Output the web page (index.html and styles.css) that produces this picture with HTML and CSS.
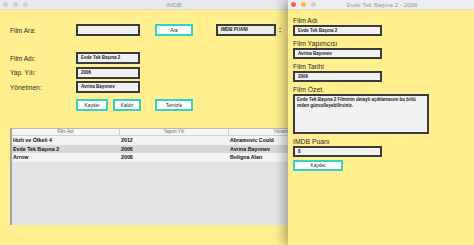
FILE: index.html
```html
<!DOCTYPE html>
<html lang="tr">
	<head>
		<meta charset="UTF-8" />
		<meta name="viewport" content="width=device-width, initial-scale=1.0" />
		<title>IMDB</title>
		<link rel="stylesheet" href="styles.css">
	</head>
	<body>
		<div class="desk">
			<!-- ana pencere -->
			<section class="win main-win">
				<header class="titlebar">
					<span class="lights"><i></i><i></i><i></i></span>
					<span class="title">IMDB</span>
				</header>
				<div class="main-body">
					<div class="row search-row">
						<span class="lbl">Film Ara:</span>
						<div class="field"></div>
						<button class="btn btn-ara">Ara</button>
						<div class="select">
							<span class="select-box">IMDB PUANI</span>
							<span class="spin">&#9652;<br>&#9662;</span>
						</div>
					</div>

					<div class="form">
						<div class="row">
							<span class="lbl">Film Adı:</span>
							<div class="field">Evde Tek Başına 2</div>
						</div>
						<div class="row">
							<span class="lbl">Yap. Yılı:</span>
							<div class="field">2006</div>
						</div>
						<div class="row">
							<span class="lbl">Yönetmen:</span>
							<div class="field">Avrina Bayonev</div>
						</div>
					</div>

					<div class="row btn-row">
						<span class="lbl"></span>
						<button class="btn btn-kaydet">Kaydet</button>
						<button class="btn btn-kaldir">Kaldır</button>
						<button class="btn btn-temizle">Temizle</button>
					</div>

					<div class="table">
						<div class="thead">
							<span>Film Adı</span>
							<span>Yapım Yılı</span>
							<span>Yönetmen</span>
						</div>
						<div class="tr">
							<span>Hızlı ve Öfkeli 4</span>
							<span>2012</span>
							<span>Abramovic Could</span>
						</div>
						<div class="tr selected">
							<span>Evde Tek Başına 2</span>
							<span>2006</span>
							<span>Avrina Bayonev</span>
						</div>
						<div class="tr">
							<span>Arrow</span>
							<span>2008</span>
							<span>Boligna Alan</span>
						</div>
					</div>
				</div>
			</section>

			<!-- detay penceresi -->
			<section class="win detail-win">
				<header class="titlebar">
					<span class="lights active"><i></i><i></i><i></i></span>
					<span class="title">Evde Tek Başına 2 - 2006</span>
				</header>
				<div class="detail-body">
					<span class="dlbl">Film Adı</span>
					<div class="dfield">Evde Tek Başına 2</div>
					<span class="dlbl">Film Yapımcısı</span>
					<div class="dfield">Avrina Bayonev</div>
					<span class="dlbl">Film Tarihi</span>
					<div class="dfield">2006</div>
					<span class="dlbl">Film Özet.</span>
					<div class="darea">Evde Tek Başına 2 Filminin detaylı açıklamasını bu bölü<br>mden güncelleyebilirsiniz.</div>
					<span class="dlbl">IMDB Puanı</span>
					<div class="dfield">8</div>
					<button class="btn btn-dkaydet">Kaydet</button>
				</div>
			</section>
		</div>
	</body>
</html>
```

FILE: styles.css
```css
* {
	padding: 0;
	margin: 0;
	border: 0;
	box-sizing: border-box;
}

body {
	font-family: "Liberation Sans", Arial, sans-serif;
	color: #222;
	background: #ffef8e;
}

.desk {
	position: relative;
	width: 474px;
	height: 245px;
	overflow: hidden;
}

.win {
	position: absolute;
	top: 0;
	height: 245px;
	background: #ffef8e;
}

.main-win {
	left: 0;
	width: 348px;
}

.detail-win {
	left: 288px;
	width: 188px;
	box-shadow: -5px 0 9px rgba(0, 0, 0, 0.28);
}

/* pencere başlığı */
.titlebar {
	position: relative;
	display: flex;
	align-items: center;
	height: 10px;
	background: #e9e9e9;
	border-bottom: 1px solid #dcdcdc;
}

.detail-win .titlebar {
	background: #ededed;
}

.lights {
	display: flex;
	gap: 5px;
	padding-left: 3px;
}

.lights i {
	display: block;
	width: 5px;
	height: 5px;
	border-radius: 50%;
	background: #cfcfcf;
}

.lights.active i:nth-child(1) {
	background: #fc5f57;
}

.lights.active i:nth-child(2) {
	background: #fdbb3f;
}

.title {
	position: absolute;
	left: 0;
	right: 0;
	text-align: center;
	font-size: 6.2px;
	color: #9a9a9a;
}

/* ana form */
.main-body {
	padding: 14px 0 0 10px;
}

.row {
	display: flex;
	align-items: center;
	height: 12px;
}

.lbl {
	width: 66px;
	font-size: 6.5px;
	color: #2a2a2a;
}

.field {
	width: 64px;
	height: 12px;
	padding-left: 3px;
	border: 2px solid #3a3a3a;
	background: #f0f0f0;
	font-size: 4.5px;
	font-weight: bold;
	line-height: 8px;
}

.btn {
	display: block;
	height: 12px;
	border: 2px solid #34d1c6;
	background: #fff;
	font-family: inherit;
	font-size: 4.8px;
	color: #222;
}

.btn-ara {
	width: 38px;
	margin-left: 15px;
}

.select {
	display: flex;
	margin-left: 23px;
	height: 12px;
}

.select-box {
	width: 60px;
	height: 12px;
	padding-left: 3px;
	border: 2px solid #3a3a3a;
	background: #ececec;
	font-size: 4.5px;
	font-weight: bold;
	line-height: 8px;
}

.spin {
	width: 7px;
	font-size: 3.5px;
	line-height: 4px;
	text-align: center;
	color: #777;
	padding-top: 2px;
}

.form {
	display: flex;
	flex-direction: column;
	gap: 2.5px;
	margin-top: 16px;
}

.btn-row {
	margin-top: 6px;
}

.btn-kaydet {
	width: 32px;
}

.btn-kaldir {
	width: 28px;
	margin-left: 5px;
}

.btn-temizle {
	width: 38px;
	margin-left: 14px;
}

/* tablo */
.table {
	width: 330px;
	height: 97px;
	margin-top: 17px;
	background: #e3e3e3;
	border-left: 2px solid #a4a4a4;
	border-top: 1px solid #b9b9b9;
}

.thead,
.tr {
	display: grid;
	grid-template-columns: 108px 109px 1fr;
}

.thead {
	height: 7px;
	background: #f6f6f6;
	border-bottom: 1px solid #d2d2d2;
	font-size: 4.6px;
	line-height: 6px;
	color: #666;
}

.thead span {
	text-align: center;
	border-right: 1px solid #d0d0d0;
}

.tr {
	height: 8.5px;
	background: #f3f3f3;
	font-size: 5.3px;
	font-weight: bold;
	line-height: 8.5px;
	color: #111;
}

.tr span {
	padding-left: 1px;
}

.tr.selected {
	background: #d7d7d7;
}

/* detay penceresi */
.detail-body {
	display: flex;
	flex-direction: column;
	align-items: flex-start;
	padding: 3px 0 0 5px;
}

.dlbl {
	height: 12px;
	padding-top: 3px;
	font-size: 6.8px;
	line-height: 9px;
	color: #2a2a2a;
}

.dfield {
	width: 89px;
	height: 11px;
	padding-left: 3px;
	border: 2px solid #3a3a3a;
	background: #f1f1f1;
	font-size: 4.5px;
	font-weight: bold;
	line-height: 7px;
}

.darea {
	width: 136px;
	height: 40px;
	padding: 1px 0 0 2px;
	border: 2px solid #3a3a3a;
	background: #f1f1f1;
	font-size: 4.5px;
	font-weight: bold;
	line-height: 5.5px;
}

.btn-dkaydet {
	width: 50px;
	height: 11px;
	margin-top: 3px;
}
```
